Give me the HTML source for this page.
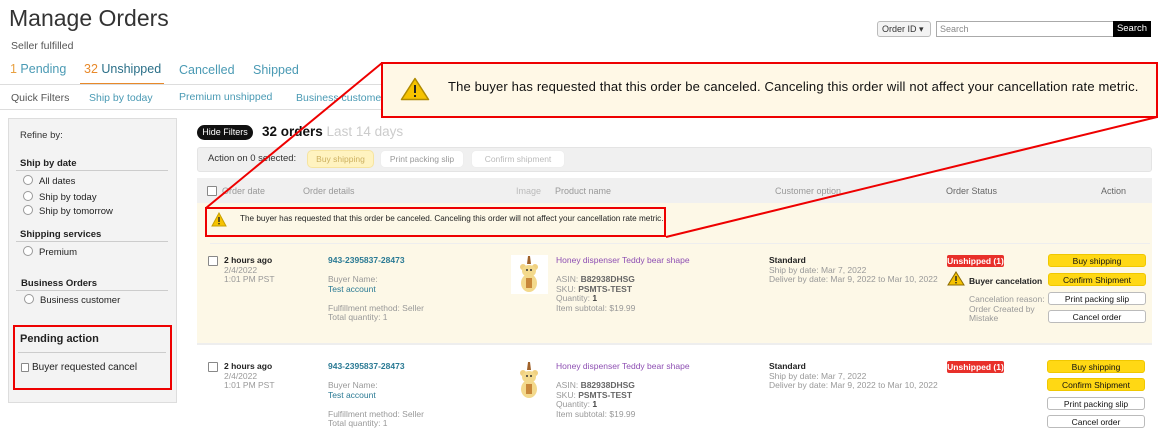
<!DOCTYPE html>
<html><head><meta charset="utf-8"><style>
*{margin:0;padding:0;box-sizing:border-box}
body{width:1166px;height:446px;background:#fff;font-family:"Liberation Sans",sans-serif;position:relative;overflow:hidden;color:#111}
.a{position:absolute;white-space:nowrap}
.g{color:#999}
.t{color:#2a7a94}
.s{font-size:9px}
.btn{position:absolute;height:13px;border-radius:3px;font-size:8.5px;text-align:center;line-height:12px;border:1px solid #bbb;background:#fff}
.y{background:#ffd814;border-color:#f0c800}
.rad{display:inline-block;width:10px;height:10px;border:1px solid #999;border-radius:50%;background:#fff;vertical-align:-1px;margin-right:6px}
.cb{position:absolute;width:10px;height:10px;border:1px solid #888;background:#fff;border-radius:1px}
</style></head><body>
<div class="a" style="left:9px;top:5px;font-size:23px;color:#333">Manage Orders</div>
<div class="a" style="left:11px;top:40px;font-size:10.5px;color:#555">Seller fulfilled</div>
<div class="a" style="left:10px;top:62px;font-size:12.5px;color:#4a9ab4"><span style="color:#e8a040">1</span> Pending</div>
<div class="a" style="left:84px;top:62px;font-size:12.5px;color:#2a6f88"><span style="color:#e8892a">32</span> Unshipped</div>
<div class="a" style="left:80px;top:83px;width:84px;height:2px;background:#e8892a"></div>
<div class="a" style="left:179px;top:63px;font-size:12.5px;color:#4a9ab4">Cancelled</div>
<div class="a" style="left:253px;top:63px;font-size:12.5px;color:#4a9ab4">Shipped</div>
<div class="a" style="left:0;top:84px;width:390px;height:1px;background:#ddd"></div>
<div class="a" style="left:11px;top:92px;font-size:10.5px;color:#555">Quick Filters</div>
<div class="a" style="left:89px;top:92px;font-size:10.5px;color:#4a9ab4">Ship by today</div>
<div class="a" style="left:179px;top:91px;font-size:10.5px;color:#4a9ab4">Premium unshipped</div>
<div class="a" style="left:296px;top:92px;font-size:10.5px;color:#4a9ab4">Business customer</div>
<div class="a" style="left:0;top:109px;width:390px;height:1px;background:#ddd"></div>

<div class="a" style="left:877px;top:21px;width:54px;height:16px;border:1px solid #bbb;border-radius:3px;background:#f3f3f3;font-size:9px;line-height:14px;padding-left:4px;color:#333">Order ID ▾</div>
<div class="a" style="left:936px;top:21px;width:178px;height:16px;border:1px solid #aaa;font-size:9px;line-height:14px;padding-left:3px;color:#888">Search</div>
<div class="a" style="left:1113px;top:21px;width:38px;height:16px;background:#000;color:#fff;font-size:9.5px;line-height:16px;text-align:center">Search</div>

<!-- sidebar -->
<div class="a" style="left:8px;top:118px;width:169px;height:285px;background:#f3f3f3;border:1px solid #ddd"></div>
<div class="a" style="left:20px;top:130px;font-size:9.5px;color:#333">Refine by:</div>
<div class="a" style="left:20px;top:158px;font-size:9.5px;font-weight:bold;color:#222">Ship by date</div>
<div class="a" style="left:16px;top:170px;width:152px;height:1px;background:#ccc"></div>
<div class="a" style="left:23px;top:175px;font-size:9.5px;color:#222"><span class="rad"></span>All dates</div>
<div class="a" style="left:23px;top:191px;font-size:9.5px;color:#222"><span class="rad"></span>Ship by today</div>
<div class="a" style="left:23px;top:205px;font-size:9.5px;color:#222"><span class="rad"></span>Ship by tomorrow</div>
<div class="a" style="left:20px;top:229px;font-size:9.5px;font-weight:bold;color:#222">Shipping services</div>
<div class="a" style="left:16px;top:241px;width:152px;height:1px;background:#ccc"></div>
<div class="a" style="left:23px;top:246px;font-size:9.5px;color:#222"><span class="rad"></span>Premium</div>
<div class="a" style="left:21px;top:278px;font-size:9.5px;font-weight:bold;color:#222">Business Orders</div>
<div class="a" style="left:16px;top:290px;width:152px;height:1px;background:#ccc"></div>
<div class="a" style="left:24px;top:294px;font-size:9.5px;color:#222"><span class="rad"></span>Business customer</div>
<div class="a" style="left:13px;top:325px;width:159px;height:65px;border:2px solid #e00"></div>
<div class="a" style="left:20px;top:333px;font-size:11px;font-weight:bold;color:#222">Pending action</div>
<div class="a" style="left:18px;top:352px;width:148px;height:1px;background:#ccc"></div>
<div class="cb" style="left:21px;top:363px;width:8px;height:9px"></div>
<div class="a" style="left:32px;top:362px;font-size:10px;color:#222">Buyer requested cancel</div>

<!-- main -->
<div class="a" style="left:197px;top:125px;width:56px;height:15px;background:#111;border-radius:8px;color:#fff;font-size:9px;line-height:15px;text-align:center">Hide Filters</div>
<div class="a" style="left:262px;top:124px;font-size:13.5px;font-weight:bold">32 orders <span style="color:#ccc;font-weight:normal">Last 14 days</span></div>
<div class="a" style="left:197px;top:147px;width:955px;height:25px;background:#f0f0f0;border:1px solid #e4e4e4;border-radius:3px"></div>
<div class="a" style="left:208px;top:153px;font-size:9.5px;color:#333">Action on 0 selected:</div>
<div class="btn" style="left:307px;top:150px;width:67px;height:18px;line-height:16px;background:#fff3c0;border-color:#f6e4a0;color:#ccb060;border-radius:5px">Buy shipping</div>
<div class="btn" style="left:380px;top:150px;width:84px;height:18px;line-height:16px;border-color:#eee;color:#999;border-radius:5px">Print packing slip</div>
<div class="btn" style="left:471px;top:150px;width:94px;height:18px;line-height:16px;border-color:#eee;color:#bbb;border-radius:5px">Confirm shipment</div>

<div class="a" style="left:197px;top:178px;width:955px;height:25px;background:#f0f0f0"></div>
<div class="cb" style="left:207px;top:186px"></div>
<div class="a g s" style="left:222px;top:186px">Order date</div>
<div class="a g s" style="left:303px;top:186px">Order details</div>
<div class="a s" style="left:516px;top:186px;color:#bbb">Image</div>
<div class="a g s" style="left:555px;top:186px">Product name</div>
<div class="a g s" style="left:775px;top:186px">Customer option</div>
<div class="a s" style="left:946px;top:186px;color:#666">Order Status</div>
<div class="a s" style="left:1101px;top:186px;color:#666">Action</div>

<div class="a" style="left:197px;top:203px;width:955px;height:140px;background:#fdf8e7"></div>
<div class="a" style="left:205px;top:207px;width:461px;height:30px;border:2px solid #e00"></div>
<svg class="a" style="left:211px;top:212px" width="16" height="15" viewBox="0 0 16 15"><path d="M8 1L15 14H1Z" fill="#f6c200" stroke="#c8a000"/><rect x="7.3" y="5" width="1.4" height="5" fill="#222"/><rect x="7.3" y="11" width="1.4" height="1.4" fill="#222"/></svg>
<div class="a" style="left:240px;top:214px;font-size:8.2px;color:#222">The buyer has requested that this order be canceled. Canceling this order will not affect your cancellation rate metric.</div>
<div class="a" style="left:210px;top:243px;width:940px;height:1px;background:#eee"></div>
<div class="a" style="left:197px;top:343px;width:955px;height:2px;background:#eee"></div>

<!-- rows -->
<div class="cb" style="left:208px;top:256px"></div>
<div class="a" style="left:224px;top:256px;font-size:8.5px;line-height:9.5px;color:#999"><b style="color:#222">2 hours ago</b><br>2/4/2022<br>1:01 PM PST</div>
<div class="a" style="left:328px;top:256px;font-size:8.5px;line-height:9.5px;color:#999"><b class="t">943-2395837-28473</b><br><br>Buyer Name:<br><span class="t">Test account</span><br><br>Fulfillment method: Seller<br>Total quantity: 1</div>
<div class="a" style="left:511px;top:255px;width:37px;height:39px;background:#fff"></div>
<svg class="a" style="left:518px;top:256px" width="22" height="36" viewBox="0 0 22 36"><path d="M10 0h2l1 8h-4z" fill="#a0622a"/><circle cx="5" cy="11" r="3" fill="#f0d080"/><circle cx="17" cy="11" r="3" fill="#f0d080"/><ellipse cx="11" cy="15" rx="7" ry="6" fill="#f3d98c"/><ellipse cx="11" cy="27" rx="8" ry="9" fill="#f3d98c"/><rect x="8" y="22" width="6" height="10" fill="#c8873a"/><circle cx="9" cy="14" r="1" fill="#333"/><circle cx="13" cy="14" r="1" fill="#333"/></svg>
<div class="a" style="left:556px;top:256px;font-size:8.5px;line-height:9.5px;color:#999"><span style="color:#8e4fb3">Honey dispenser Teddy bear shape</span><br><br>ASIN: <b style="color:#666">B82938DHSG</b><br>SKU: <b style="color:#666">PSMTS-TEST</b><br>Quantity: <b style="color:#444">1</b><br>Item subtotal: $19.99</div>
<div class="a" style="left:769px;top:256px;font-size:8.5px;line-height:9.5px;color:#999"><b style="color:#222">Standard</b><br>Ship by date: Mar 7, 2022<br>Deliver by date: Mar 9, 2022 to Mar 10, 2022</div>
<div class="a" style="left:947px;top:255px;width:57px;height:12px;background:#e8302a;border-radius:2px;color:#fff;font-size:8.5px;font-weight:bold;line-height:12px;text-align:center">Unshipped (1)</div>
<svg class="a" style="left:947px;top:271px" width="18" height="15" viewBox="0 0 18 15"><path d="M9 1L17 14H1Z" fill="#f6c200" stroke="#8a6a00"/><rect x="8.3" y="5" width="1.4" height="5" fill="#222"/><rect x="8.3" y="11" width="1.4" height="1.4" fill="#222"/></svg>
<div class="a" style="left:969px;top:276px;font-size:8.5px;font-weight:bold;color:#222">Buyer cancelation</div>
<div class="a" style="left:969px;top:295px;font-size:8.5px;line-height:9.5px;color:#999">Cancelation reason:<br>Order Created by<br>Mistake</div>
<div class="btn y" style="left:1048px;top:254px;width:98px">Buy shipping</div>
<div class="btn y" style="left:1048px;top:273px;width:98px">Confirm Shipment</div>
<div class="btn" style="left:1048px;top:292px;width:98px">Print packing slip</div>
<div class="btn" style="left:1048px;top:310px;width:98px">Cancel order</div>

<div class="cb" style="left:208px;top:362px"></div>
<div class="a" style="left:224px;top:362px;font-size:8.5px;line-height:9.5px;color:#999"><b style="color:#222">2 hours ago</b><br>2/4/2022<br>1:01 PM PST</div>
<div class="a" style="left:328px;top:362px;font-size:8.5px;line-height:9.5px;color:#999"><b class="t">943-2395837-28473</b><br><br>Buyer Name:<br><span class="t">Test account</span><br><br>Fulfillment method: Seller<br>Total quantity: 1</div>
<svg class="a" style="left:518px;top:362px" width="22" height="36" viewBox="0 0 22 36"><path d="M10 0h2l1 8h-4z" fill="#a0622a"/><circle cx="5" cy="11" r="3" fill="#f0d080"/><circle cx="17" cy="11" r="3" fill="#f0d080"/><ellipse cx="11" cy="15" rx="7" ry="6" fill="#f3d98c"/><ellipse cx="11" cy="27" rx="8" ry="9" fill="#f3d98c"/><rect x="8" y="22" width="6" height="10" fill="#c8873a"/><circle cx="9" cy="14" r="1" fill="#333"/><circle cx="13" cy="14" r="1" fill="#333"/></svg>
<div class="a" style="left:556px;top:362px;font-size:8.5px;line-height:9.5px;color:#999"><span style="color:#8e4fb3">Honey dispenser Teddy bear shape</span><br><br>ASIN: <b style="color:#666">B82938DHSG</b><br>SKU: <b style="color:#666">PSMTS-TEST</b><br>Quantity: <b style="color:#444">1</b><br>Item subtotal: $19.99</div>
<div class="a" style="left:769px;top:362px;font-size:8.5px;line-height:9.5px;color:#999"><b style="color:#222">Standard</b><br>Ship by date: Mar 7, 2022<br>Deliver by date: Mar 9, 2022 to Mar 10, 2022</div>
<div class="a" style="left:947px;top:361px;width:57px;height:12px;background:#e8302a;border-radius:2px;color:#fff;font-size:8.5px;font-weight:bold;line-height:12px;text-align:center">Unshipped (1)</div>
<div class="btn y" style="left:1047px;top:360px;width:98px">Buy shipping</div>
<div class="btn y" style="left:1047px;top:378px;width:98px">Confirm Shipment</div>
<div class="btn" style="left:1047px;top:397px;width:98px">Print packing slip</div>
<div class="btn" style="left:1047px;top:415px;width:98px">Cancel order</div>

<!-- callout -->
<div class="a" style="left:381px;top:62px;width:777px;height:56px;background:#fff8e6;border:2px solid #e00"></div>
<svg class="a" style="left:400px;top:77px" width="30" height="24" viewBox="0 0 30 24"><path d="M15 1.5L28.5 22.5H1.5Z" fill="#f6c200" stroke="#b08a00" stroke-width="1.5" stroke-linejoin="round"/><rect x="14" y="8" width="2" height="8" fill="#222"/><rect x="14" y="18" width="2" height="2" fill="#222"/></svg>
<div class="a" style="left:448px;top:79px;font-size:13px;letter-spacing:0.15px;color:#111">The buyer has requested that this order be canceled. Canceling this order will not affect your cancellation rate metric.</div>
<svg class="a" style="left:0;top:0" width="1166" height="446"><line x1="382" y1="63" x2="206" y2="208" stroke="#e00" stroke-width="2"/><line x1="1157" y1="117" x2="666" y2="237" stroke="#e00" stroke-width="2"/></svg>
</body></html>
